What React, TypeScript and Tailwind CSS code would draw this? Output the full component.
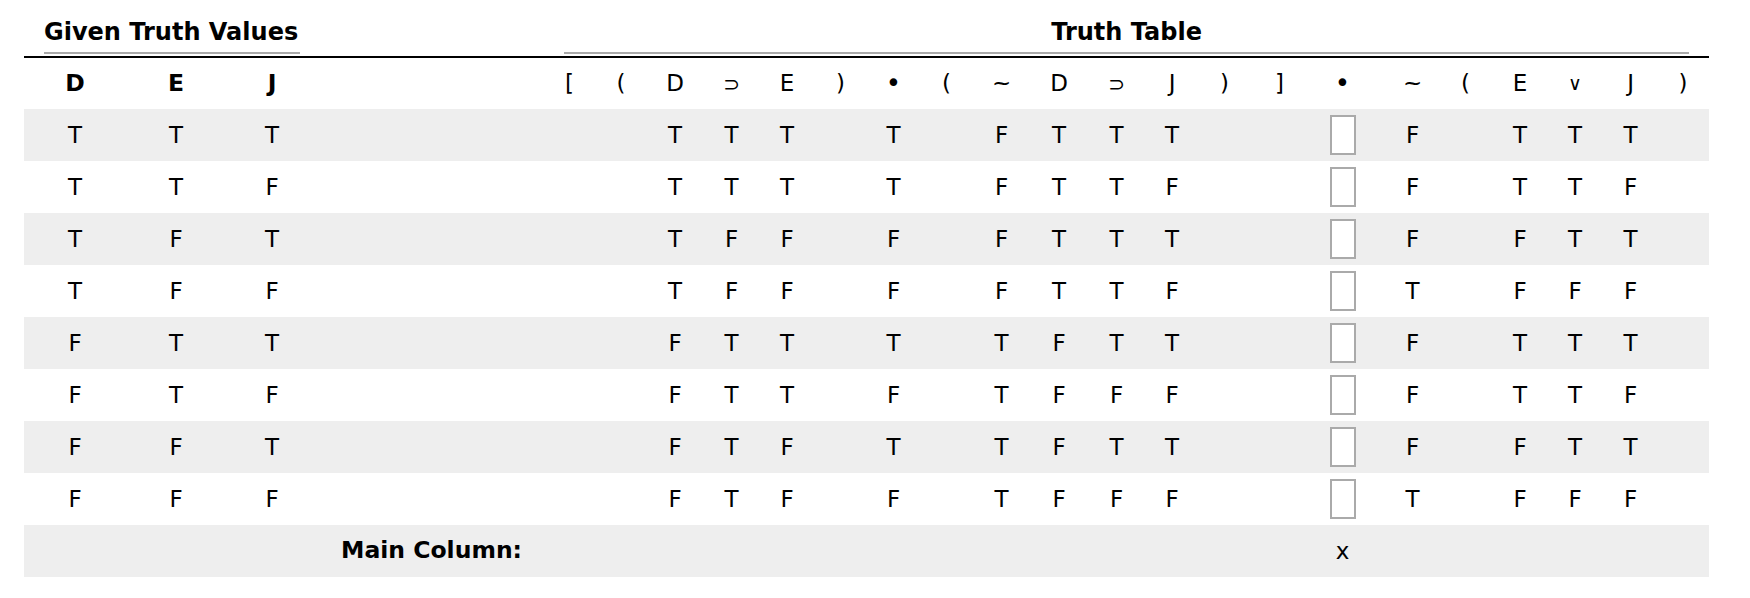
import React from "react";

const widths = [
  "w-[102px]", "w-[100px]", "w-[92px]", "w-[226px]",
  "w-[51px]", "w-[52px]", "w-[56px]", "w-[57px]", "w-[54px]", "w-[53px]", "w-[53px]",
  "w-[53px]", "w-[57px]", "w-[58px]", "w-[57px]", "w-[54px]", "w-[51px]", "w-[59px]",
  "w-[67px]", "w-[62px]", "w-[55px]", "w-[54px]", "w-[52px]", "w-[54px]", "w-[56px]",
];

// per-column left padding nudges for the truth-table columns
const nudge: string[] = [
  "", "", "", "", "", "", "", "", "", "", "", "", "", "", "",
  "pl-[11px]", "", "", "pl-[4px]", "pl-[9px]", "pl-[4px]",
];

type Sym = { s: string; cls?: string };
const symbols: Sym[] = [
  { s: "[" }, { s: "(" }, { s: "D" }, { s: "⊃", cls: "text-[20px]" }, { s: "E" }, { s: ")" },
  { s: "•", cls: "text-[26px]" }, { s: "(" }, { s: "~" }, { s: "D" }, { s: "⊃", cls: "text-[20px]" },
  { s: "J" }, { s: ")" }, { s: "]" }, { s: "•", cls: "text-[26px]" }, { s: "~" }, { s: "(" },
  { s: "E" }, { s: "∨", cls: "text-[19px]" }, { s: "J" }, { s: ")" },
];

// "B" marks the answer box
const rows: { given: string[]; vals: string[] }[] = [
  { given: ["T", "T", "T"], vals: ["", "", "T", "T", "T", "", "T", "", "F", "T", "T", "T", "", "", "B", "F", "", "T", "T", "T", ""] },
  { given: ["T", "T", "F"], vals: ["", "", "T", "T", "T", "", "T", "", "F", "T", "T", "F", "", "", "B", "F", "", "T", "T", "F", ""] },
  { given: ["T", "F", "T"], vals: ["", "", "T", "F", "F", "", "F", "", "F", "T", "T", "T", "", "", "B", "F", "", "F", "T", "T", ""] },
  { given: ["T", "F", "F"], vals: ["", "", "T", "F", "F", "", "F", "", "F", "T", "T", "F", "", "", "B", "T", "", "F", "F", "F", ""] },
  { given: ["F", "T", "T"], vals: ["", "", "F", "T", "T", "", "T", "", "T", "F", "T", "T", "", "", "B", "F", "", "T", "T", "T", ""] },
  { given: ["F", "T", "F"], vals: ["", "", "F", "T", "T", "", "F", "", "T", "F", "F", "F", "", "", "B", "F", "", "T", "T", "F", ""] },
  { given: ["F", "F", "T"], vals: ["", "", "F", "T", "F", "", "T", "", "T", "F", "T", "T", "", "", "B", "F", "", "F", "T", "T", ""] },
  { given: ["F", "F", "F"], vals: ["", "", "F", "T", "F", "", "F", "", "T", "F", "F", "F", "", "", "B", "T", "", "F", "F", "F", ""] },
];

export default function App() {
  return (
    <div className="min-h-[598px] bg-white pl-[24px] font-['DejaVu_Sans',sans-serif] text-[23px] text-black">
      <table className="table-fixed border-collapse w-[1685px]">
        <colgroup>
          {widths.map((w, i) => (
            <col key={i} className={w} />
          ))}
        </colgroup>
        <tbody>
          <tr>
            <td colSpan={3} className="border-b-2 border-black pl-[20px] pr-[18px] pb-[2px] align-bottom">
              <div className="pt-[18px] pb-[6px] border-b-2 border-[#aaaaaa] leading-[28px] font-bold text-[24px] text-left whitespace-nowrap">
                Given Truth Values
              </div>
            </td>
            <td className="border-b-2 border-black"></td>
            <td colSpan={21} className="border-b-2 border-black px-[20px] pb-[2px] align-bottom">
              <div className="pt-[18px] pb-[6px] border-b-2 border-[#aaaaaa] leading-[28px] font-bold text-[24px] text-center">
                Truth Table
              </div>
            </td>
          </tr>
          <tr className="h-[52px]">
            {["D", "E", "J"].map((g) => (
              <td key={g} className="text-center font-bold text-[23.5px] p-0">
                {g}
              </td>
            ))}
            <td className="p-0"></td>
            {symbols.map((sym, i) => (
              <td key={i} className={`text-center p-0 ${nudge[i]} ${sym.cls ?? ""}`}>
                {sym.s}
              </td>
            ))}
          </tr>
          {rows.map((r, ri) => (
            <tr key={ri} className={`h-[52px] ${ri % 2 === 0 ? "bg-[#eeeeee]" : "bg-white"}`}>
              {r.given.map((g, gi) => (
                <td key={gi} className="text-center p-0">
                  {g}
                </td>
              ))}
              <td className="p-0"></td>
              {r.vals.map((v, vi) => (
                <td key={vi} className={`text-center p-0 ${nudge[vi]}`}>
                  {v === "B" ? (
                    <div className="mx-auto h-[40px] w-[26px] border-2 border-[#aaaaaa] bg-white"></div>
                  ) : (
                    v
                  )}
                </td>
              ))}
            </tr>
          ))}
          <tr className="h-[52px] bg-[#eeeeee]">
            <td colSpan={4} className="text-right pr-[22px] font-bold text-[23.5px] p-0">
              Main Column:
            </td>
            {symbols.map((_, i) => (
              <td key={i} className="text-center p-0">
                {i === 14 ? "x" : ""}
              </td>
            ))}
          </tr>
        </tbody>
      </table>
    </div>
  );
}
